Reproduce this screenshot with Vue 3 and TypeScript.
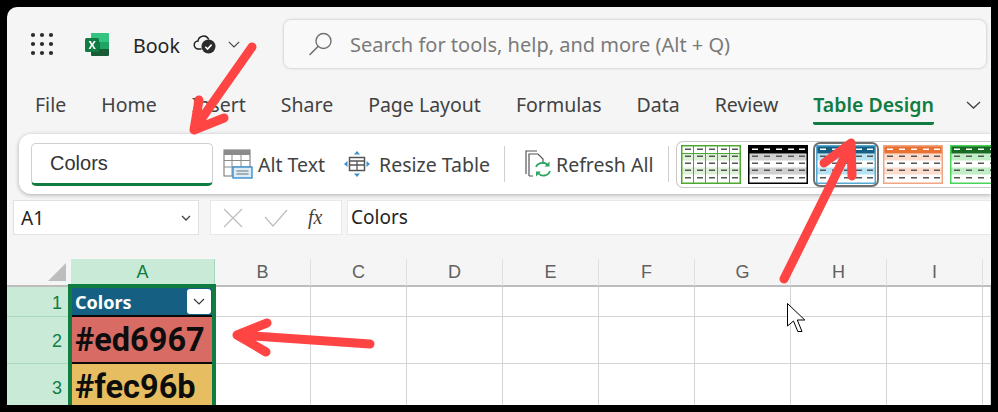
<script setup lang="ts">
const tabs = ['File', 'Home', 'Insert', 'Share', 'Page Layout', 'Formulas', 'Data', 'Review']
const columns = ['B', 'C', 'D', 'E', 'F', 'G', 'H', 'I']

interface Swatch {
  head: string
  band: string
  line: string
  dash: string
  selected?: boolean
  grid?: boolean
}
const swatches: Swatch[] = [
  { head: '#ffffff', band: '#dff0d8', line: '#4ea72e', dash: '#555555', grid: true },
  { head: '#000000', band: '#d0d0d0', line: '#000000', dash: '#555555' },
  { head: '#156082', band: '#b8e3f2', line: '#55a9d4', dash: '#555555', selected: true },
  { head: '#e97132', band: '#fbdccd', line: '#f1a583', dash: '#555555' },
  { head: '#196b24', band: '#c1eec6', line: '#47d459', dash: '#555555' }
]
const rowYs = [3.5, 10.5, 17.5, 24.5, 32]
const colXs = [4, 16, 28, 40, 51]
</script>

<template>
  <div class="screen">
    <div class="app">
      <header class="titlebar">
        <svg class="waffle" width="24" height="24" viewBox="0 0 24 24">
          <template v-for="x in [3, 12, 21]" :key="x">
            <circle v-for="y in [3, 12, 21]" :key="y" :cx="x" :cy="y" r="2.1" fill="#2b2b2b" />
          </template>
        </svg>
        <svg class="logo" width="25" height="25" viewBox="0 0 25 25">
          <path d="M6 1h17a1 1 0 0 1 1 1v8H6z" fill="#33c481" />
          <path d="M15 10h9v7h-9z" fill="#21a366" />
          <path d="M6 10h9v7H6z" fill="#107c41" />
          <path d="M6 17h18v6a1 1 0 0 1-1 1H7a1 1 0 0 1-1-1z" fill="#185c37" />
          <rect x="0" y="6" width="14" height="14" rx="1.5" fill="#107c41" />
          <path d="M3.6 9h2.1l1.5 2.8L8.700 9h2l-2.400 4 2.500 4H8.700l-1.600-2.900L5.500 17h-2l2.500-4z" fill="#fff" />
        </svg>
        <span class="book">Book</span>
        <svg class="cloud" width="24" height="22" viewBox="0 0 24 22">
          <path d="M8 16H5.500a4 4 0 0 1-.5-8 5.600 5.600 0 0 1 10.500-2" fill="none" stroke="#222" stroke-width="1.5" stroke-linecap="round" />
          <circle cx="15.500" cy="13.500" r="7" fill="#2b2b2b" />
          <path d="M12.300 13.700l2.300 2.300 4-4.400" fill="none" stroke="#fff" stroke-width="1.600" />
        </svg>
        <svg class="caret" width="12" height="7" viewBox="0 0 12 7">
          <path d="M.8.8l5.200 5.200 5.200-5.200" fill="none" stroke="#424242" stroke-width="1.100" />
        </svg>
        <div class="search">
          <svg width="26" height="26" viewBox="0 0 26 26">
            <circle cx="15.500" cy="10" r="7.500" fill="none" stroke="#707070" stroke-width="1.400" />
            <path d="M10 15.500L2 23.500" stroke="#707070" stroke-width="1.600" stroke-linecap="round" />
          </svg>
          <span>Search for tools, help, and more (Alt + Q)</span>
        </div>
      </header>

      <nav class="tabs">
        <span v-for="tab in tabs" :key="tab" class="tab">{{ tab }}</span>
        <span class="tab active">Table Design</span>
        <svg class="tabs-more" width="15" height="8" viewBox="0 0 15 8">
          <path d="M1 1l6.500 6 6.500-6" fill="none" stroke="#424242" stroke-width="1.300" />
        </svg>
      </nav>

      <section class="ribbon">
        <div class="table-name">Colors</div>
        <button class="tool alt">
          <svg width="30" height="30" viewBox="0 0 30 30">
            <rect x="1" y="1" width="26" height="26" fill="#fff" stroke="#707070" />
            <path d="M1 1h26v5H1z" fill="#8a8a8a" />
            <path d="M1 11.500h26M1 18h26M9 6v21M18 6v21" stroke="#8a8a8a" />
            <rect x="10" y="18" width="19" height="11" fill="#dcecf8" stroke="#3a8fcc" stroke-width="1.400" />
            <path d="M13.500 22h12M13.500 25h12" stroke="#707070" />
          </svg>
          <span>Alt Text</span>
        </button>
        <button class="tool resize">
          <svg width="26" height="28" viewBox="0 0 26 28">
            <rect x="5.500" y="7.500" width="15" height="13" fill="#fff" stroke="#555" stroke-width="1.500" />
            <path d="M5.500 11h15M5.500 15h15M13 11v9.500" stroke="#555" stroke-width="1.300" />
            <path d="M13 1l3 3.500h-6zM13 27l3-3.500h-6zM0 14l3.500-3v6zM26 14l-3.500-3v6z" fill="#3a8fcc" />
          </svg>
          <span>Resize Table</span>
        </button>
        <i class="divider first"></i>
        <button class="tool refresh">
          <svg width="30" height="30" viewBox="0 0 30 30">
            <path d="M2 25V2h11" fill="none" stroke="#555" stroke-width="1.200" />
            <path d="M5 27V5h9l5 5v5M5 27h4" fill="none" stroke="#555" stroke-width="1.200" />
            <path d="M12 18a7 7 0 0 1 12-1.500M26 22a7 7 0 0 1-12 2" fill="none" stroke="#2fa562" stroke-width="1.800" />
            <path d="M25.500 12.500v5h-5zM12 27.500v-5h5z" fill="#2fa562" />
          </svg>
          <span>Refresh All</span>
        </button>
        <i class="divider second"></i>
        <div class="gallery">
          <div v-for="(s, i) in swatches" :key="i" class="swatch" :class="{ selected: s.selected }">
            <svg width="60" height="39" viewBox="0 0 60 39">
              <rect width="60" height="39" fill="#fff" />
              <rect y="8.500" width="60" height="7" :fill="s.band" />
              <rect y="22.500" width="60" height="7" :fill="s.band" />
              <rect width="60" height="8.500" :fill="s.head" />
              <template v-if="s.grid">
                <path d="M12.500 0v39M24.500 0v39M36.500 0v39M48.500 0v39M0 8.500h60" :stroke="s.line" fill="none" />
              </template>
              <template v-for="(y, r) in rowYs" :key="y">
                <rect
                  v-for="x in colXs"
                  :key="x"
                  :x="x"
                  :y="y"
                  width="6"
                  height="1.500"
                  :fill="r === 0 && s.head !== '#ffffff' ? '#ffffff' : s.dash"
                />
              </template>
              <rect x=".75" y=".75" width="58.500" height="37.500" fill="none" :stroke="s.line" stroke-width="1.500" />
            </svg>
          </div>
        </div>
      </section>

      <section class="formula">
        <div class="namebox">
          <span>A1</span>
          <svg width="10" height="6" viewBox="0 0 10 6">
            <path d="M1 1l4 4 4-4" fill="none" stroke="#424242" stroke-width="1.300" />
          </svg>
        </div>
        <div class="fx-tools">
          <svg width="20" height="20" viewBox="0 0 20 20">
            <path d="M1 1l18 18M19 1L1 19" stroke="#bdbdbd" stroke-width="1.200" />
          </svg>
          <svg width="24" height="18" viewBox="0 0 24 18">
            <path d="M1 8l8 9L23 1" fill="none" stroke="#bdbdbd" stroke-width="1.200" />
          </svg>
          <span class="fx">fx</span>
        </div>
        <div class="fx-input">Colors</div>
      </section>

      <section class="sheet">
        <div class="corner"><i class="corner-mark"></i></div>
        <div class="col-head selected">A</div>
        <div v-for="c in columns" :key="c" class="col-head">{{ c }}</div>
        <div class="col-head tail"></div>

        <div class="row-head">1</div>
        <div class="cell-a head">
          <span class="head-label">Colors</span>
          <span class="filter">
            <svg width="12" height="7" viewBox="0 0 12 7">
              <path d="M1 1l5 5 5-5" fill="none" stroke="#333" stroke-width="1.100" />
            </svg>
          </span>
        </div>
        <div v-for="c in columns" :key="'r1' + c" class="cell"></div>
        <div class="cell"></div>

        <div class="row-head">2</div>
        <div class="cell-a red">#ed6967</div>
        <div v-for="c in columns" :key="'r2' + c" class="cell"></div>
        <div class="cell"></div>

        <div class="row-head">3</div>
        <div class="cell-a yellow">#fec96b</div>
        <div v-for="c in columns" :key="'r3' + c" class="cell"></div>
        <div class="cell"></div>
      </section>

      <div class="selection"></div>
    </div>

    <svg class="overlay" width="998" height="412" viewBox="0 0 998 412">
      <g fill="none" stroke="#ff4444" stroke-width="9" stroke-linecap="round" stroke-linejoin="round">
        <path d="M252 47L195 128M199 100L194 130L224 118" />
        <path d="M370 344L240 335M267 323L237 335L266 352" />
        <path d="M784 279L850 146M824 163L851 143L852 176" />
      </g>
      <path d="M787.500 303.500v22.500l6-5 4.300 10.500h4.200l-4.700-11.500h7.500z" fill="#fff" stroke="#000" stroke-width="1" />
    </svg>
  </div>
</template>

<style scoped>
.screen {
  position: relative;
  box-sizing: border-box;
  width: 998px;
  height: 412px;
  padding: 7px;
  background: #000;
  overflow: hidden;
  font-family: "Noto Sans", "Open Sans", sans-serif;
  color: #424242;
}
.app {
  position: relative;
  height: 398px;
  background: #f5f5f5;
  border-top-left-radius: 10px;
  overflow: hidden;
  display: flex;
  flex-direction: column;
}
.titlebar {
  height: 48px;
  padding-top: 13px;
  display: flex;
  align-items: center;
  flex: none;
}
.waffle { margin-left: 23px; }
.logo { margin-left: 31px; }
.book {
  margin-left: 23px;
  padding-top: 2px;
  font-size: 19.6px;
  color: #242424;
}
.cloud { margin-left: 13px; }
.caret { margin-left: 11px; }
.search {
  margin-left: 44px;
  width: 702px;
  height: 48px;
  box-sizing: border-box;
  background: #f9f9f9;
  border-radius: 7px;
  box-shadow: 0 0 3px rgba(0, 0, 0, 0.25);
  display: flex;
  align-items: center;
  padding-left: 24px;
  gap: 16px;
  font-size: 20px;
  color: #7a7a7a;
  white-space: nowrap;
}
.tabs {
  height: 66px;
  display: flex;
  align-items: flex-start;
  gap: 35px;
  padding-left: 28px;
  flex: none;
}
.tab {
  font-size: 19.5px;
  line-height: 28px;
  padding-top: 23px;
  padding-bottom: 3px;
  white-space: nowrap;
}
.tab.active {
  color: #107c41;
  font-weight: 600;
  border-bottom: 3px solid #107c41;
  border-radius: 2px;
}
.tabs-more { margin-top: 33px; margin-left: -3px; }
.ribbon {
  margin-left: 12px;
  height: 60px;
  flex: none;
  background: #fff;
  border-radius: 12px 0 0 12px;
  box-shadow: 0 1px 4px rgba(0, 0, 0, 0.3);
  display: flex;
  align-items: center;
  padding-left: 12px;
}
.table-name {
  width: 182px;
  height: 43px;
  box-sizing: border-box;
  padding: 8px 0 0 18px;
  border: 1px solid #cfcfcf;
  border-bottom: 3px solid #107c41;
  border-radius: 5px;
  font-family: "Liberation Sans", sans-serif;
  font-size: 20px;
  color: #333;
  flex: none;
}
.tool {
  border: 0;
  background: none;
  padding: 0;
  font: inherit;
  font-size: 19.5px;
  color: #424242;
  display: flex;
  align-items: center;
  white-space: nowrap;
  flex: none;
}
.alt { margin-left: 10px; gap: 5px; }
.resize { margin-left: 19px; gap: 9px; }
.refresh { margin-left: 19px; gap: 2px; }
.divider {
  width: 1px;
  height: 36px;
  background: #cfcfcf;
  flex: none;
}
.divider.first { margin-left: 14px; }
.divider.second { margin-left: 14px; }
.gallery {
  margin-left: 7px;
  height: 47px;
  flex: 1;
  min-width: 0;
  box-sizing: border-box;
  border: 1px solid #c8c8c8;
  border-right: 0;
  border-radius: 7px 0 0 7px;
  display: flex;
  align-items: center;
  padding-left: 4px;
  gap: 7px;
  overflow: hidden;
}
.swatch {
  flex: none;
  height: 39px;
  line-height: 0;
}
.swatch.selected {
  outline: 2px solid #6f6f6f;
  outline-offset: 1px;
  border-radius: 4px;
  margin-left: 1px;
}
.formula {
  margin-top: 6px;
  margin-left: 6px;
  height: 35px;
  flex: none;
  display: flex;
  gap: 11px;
}
.namebox {
  width: 186px;
  box-sizing: border-box;
  background: #fff;
  border: 1px solid #e0e0e0;
  display: flex;
  align-items: center;
  justify-content: space-between;
  padding: 0 7px;
  font-size: 19px;
  color: #242424;
  flex: none;
}
.fx-tools {
  width: 132px;
  box-sizing: border-box;
  background: #fff;
  border: 1px solid #e8e8e8;
  display: flex;
  align-items: center;
  padding-left: 12px;
  gap: 21px;
  flex: none;
}
.fx {
  margin-left: -1px;
  font-family: "Liberation Serif", serif;
  font-style: italic;
  font-size: 20px;
  color: #424242;
}
.fx-input {
  flex: 1;
  margin-left: -6px;
  background: #fff;
  border: 1px solid #e8e8e8;
  border-right: 0;
  padding-left: 3px;
  font-size: 19px;
  line-height: 33px;
  color: #242424;
}
.sheet {
  margin-top: 24px;
  display: grid;
  grid-template-columns: 64px 144px repeat(8, 96px) 1fr;
  grid-template-rows: 28px 30px 47px 47px;
  flex: none;
  font-family: "Liberation Sans", sans-serif;
  background: #fff;
}
.corner {
  background: #f5f5f5;
  border-bottom: 2px solid #bdbdbd;
  box-sizing: border-box;
  position: relative;
}
.corner-mark {
  position: absolute;
  right: 5px;
  bottom: 4px;
  width: 18px;
  height: 18px;
  background: #bdbdbd;
  clip-path: polygon(100% 0, 100% 100%, 0 100%);
}
.col-head {
  background: #f5f5f5;
  box-sizing: border-box;
  border-bottom: 2px solid #bdbdbd;
  border-right: 1px solid #e0e0e0;
  text-align: center;
  font-size: 18px;
  line-height: 27px;
  color: #616161;
}
.col-head.selected {
  background: #caead8;
  color: #107c41;
  border-right-color: #a5d9bb;
}
.col-head.tail { border-right: 0; }
.row-head {
  background: #caead8;
  box-sizing: border-box;
  border-bottom: 1px solid #a5d9bb;
  color: #107c41;
  padding-right: 9px;
  padding-top: 3px;
  font-size: 18px;
  display: flex;
  align-items: center;
  justify-content: flex-end;
}
.cell {
  box-sizing: border-box;
  border-right: 1px solid #d4d4d4;
  border-bottom: 1px solid #d4d4d4;
}
.cell-a {
  box-sizing: border-box;
  font-family: Roboto, "Noto Sans", sans-serif;
  font-weight: 700;
  color: #0d0d0d;
  font-size: 32.500px;
  display: flex;
  align-items: center;
  padding-left: 4px;
  border-bottom: 2px solid #0a0a0a;
  min-width: 0;
  overflow: hidden;
}
.cell-a.head {
  background: #156082;
  color: #fff;
  font-family: "Noto Sans", sans-serif;
  font-size: 18px;
  justify-content: space-between;
  padding-right: 4px;
}
.head-label { padding-top: 2px; }
.cell-a.red { background: #d86b64; }
.cell-a.yellow { background: #e6bd60; }
.filter {
  width: 24px;
  height: 25px;
  background: #fff;
  border-radius: 3px;
  display: flex;
  align-items: center;
  justify-content: center;
}
.selection {
  position: absolute;
  left: 61px;
  top: 277px;
  width: 148px;
  height: 130px;
  box-sizing: border-box;
  border: 4px solid #107c41;
  pointer-events: none;
}
.overlay {
  position: absolute;
  left: 0;
  top: 0;
  pointer-events: none;
}
</style>
